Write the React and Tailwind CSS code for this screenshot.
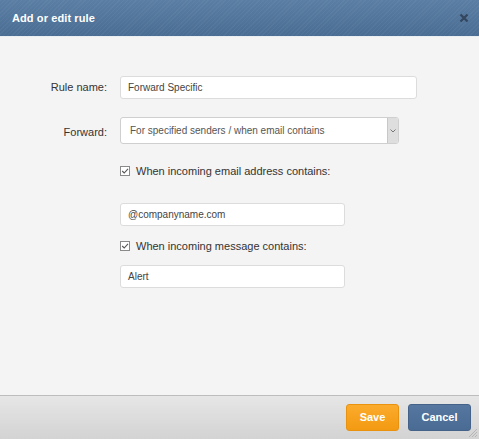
import React from "react";

const font = { fontFamily: '"Liberation Sans", Arial, sans-serif' };

const CheckBox = () => (
  <svg width="10" height="10" viewBox="0 0 10 10" className="shrink-0">
    <rect x="0.5" y="0.5" width="9" height="9" fill="#fff" stroke="#8a8a8a" />
    <path d="M2.2 5 L4.2 7 L8 2.8" fill="none" stroke="#555" strokeWidth="1.1" />
  </svg>
);

const TextInput = ({ value, width }) => (
  <div
    className={`h-[23px] ${width} bg-white border border-[#dcdcdc] rounded-[3px] flex items-center px-[7px] text-[10px] text-[#444]`}
  >
    {value}
  </div>
);

const App = () => {
  return (
    <div className="w-[479px] h-[439px] flex flex-col bg-[#f4f4f4] overflow-hidden" style={font}>
      {/* header */}
      <div className="h-[37px] shrink-0 flex items-center justify-between pl-[12px] pr-[10px] border-b border-[#e9eef3] bg-[repeating-linear-gradient(135deg,rgba(255,255,255,0.04)_0px,rgba(255,255,255,0.04)_1px,transparent_1px,transparent_3px),linear-gradient(#5a7ea4,#4a6d93)]">
        <span className="text-white font-bold text-[11px] tracking-[0.1px]">Add or edit rule</span>
        <svg width="10" height="10" viewBox="0 0 10 10">
          <path d="M1.5 1.5 L8.5 8.5 M8.5 1.5 L1.5 8.5" stroke="#34475f" strokeWidth="2.4" />
        </svg>
      </div>

      {/* body */}
      <div className="flex-1 flex flex-col pt-[39px] text-[11px] text-[#333]">
        <div className="flex items-center">
          <div className="w-[107px] text-right">Rule name:</div>
          <div className="ml-[13px]">
            <TextInput value="Forward Specific" width="w-[297px]" />
          </div>
        </div>

        <div className="flex items-center mt-[18px]">
          <div className="w-[107px] text-right pt-[4px]">Forward:</div>
          <div className="ml-[13px] w-[279px] h-[27px] bg-white border border-[#cfcfcf] rounded-[3px] flex overflow-hidden">
            <div className="flex-1 flex items-center px-[9px] text-[10px] text-[#555]">
              For specified senders / when email contains
            </div>
            <div className="w-[11px] bg-[#dedede] border-l border-[#c8c8c8] flex items-center justify-center">
              <svg width="6" height="4" viewBox="0 0 6 4">
                <path d="M0.5 0.5 L3 3 L5.5 0.5" fill="none" stroke="#777" strokeWidth="1" />
              </svg>
            </div>
          </div>
        </div>

        <div className="ml-[120px] mt-[20px] flex items-center gap-[6px] h-[14px]">
          <CheckBox />
          <span>When incoming email address contains:</span>
        </div>

        <div className="ml-[120px] mt-[25px]">
          <TextInput value="@companyname.com" width="w-[225px]" />
        </div>

        <div className="ml-[120px] mt-[13px] flex items-center gap-[6px] h-[14px]">
          <CheckBox />
          <span>When incoming message contains:</span>
        </div>

        <div className="ml-[120px] mt-[12px]">
          <TextInput value="Alert" width="w-[225px]" />
        </div>
      </div>

      {/* footer */}
      <div className="relative h-[44px] shrink-0 border-t border-[#bdbdbd] bg-[linear-gradient(#e6e6e6,#d3d3d3)] flex items-start justify-end gap-[9px] pt-[8px] pr-[8px]">
        <button className="w-[53px] h-[27px] rounded-[3px] bg-[linear-gradient(#fbab2c,#f39a12)] border border-[#e8920f] text-white font-bold text-[11px]">
          Save
        </button>
        <button className="w-[63px] h-[27px] rounded-[3px] bg-[linear-gradient(#5577a0,#4a6b92)] border border-[#456388] text-white font-bold text-[11px]">
          Cancel
        </button>
        <svg className="absolute right-[1px] bottom-[1px]" width="12" height="12" viewBox="0 0 12 12">
          <path d="M11 3 L3 11 M11 6 L6 11 M11 9 L9 11" stroke="#b5b5b5" strokeWidth="1" />
        </svg>
      </div>
    </div>
  );
};

export default App;
